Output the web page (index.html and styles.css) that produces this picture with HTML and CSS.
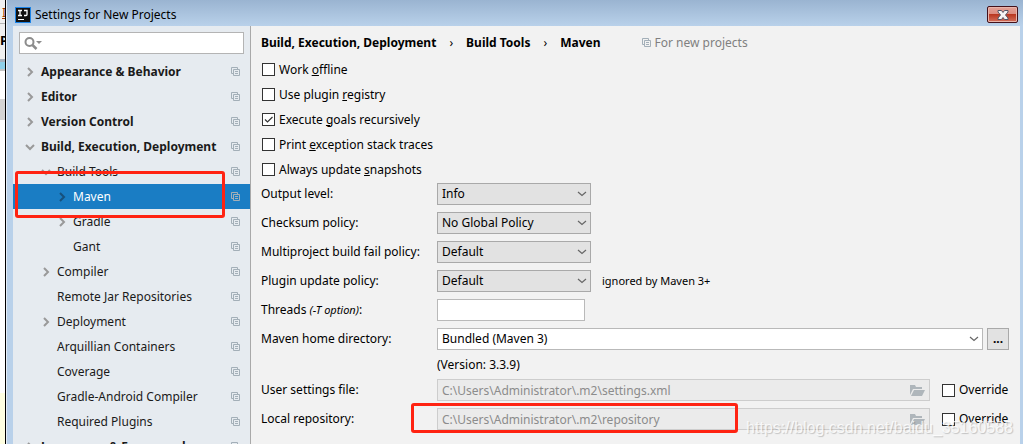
FILE: index.html
```
<!DOCTYPE html>
<html lang="en">
<head>
  <meta charset="UTF-8" />
  <meta name="viewport" content="width=device-width, initial-scale=1" />
  <title>Settings for New Projects</title>
  <link rel="stylesheet" href="styles.css">
</head>
<body>

  <!-- shared icons -->
  <svg class="sprite" aria-hidden="true">
    <symbol id="copy" viewBox="0 0 9 9">
      <path d="M2.5 6.5h-2v-6h6v2M2.5 2.5h6v6h-6zM4 4.5h3M4 6.5h3" fill="none" stroke="currentColor"/>
    </symbol>
    <symbol id="right" viewBox="0 0 8 10">
      <path d="M2 1l4 4-4 4" fill="none" stroke="currentColor" stroke-width="2"/>
    </symbol>
    <symbol id="down" viewBox="0 0 10 8">
      <path d="M1 2l4 4 4-4" fill="none" stroke="currentColor" stroke-width="2"/>
    </symbol>
    <symbol id="drop" viewBox="0 0 10 6">
      <path d="M1 1l4 3.5L9 1" fill="none" stroke="#666" stroke-width="1.2"/>
    </symbol>
    <symbol id="folder" viewBox="0 0 15 11">
      <path d="M0 0h5l1 2h6v2H3L0 10z" fill="currentColor"/>
      <path d="M4 5h11l-3 6H1z" fill="currentColor"/>
    </symbol>
  </svg>

  <div class="desktop">
    <div class="behind" aria-hidden="true">
      <div class="behind-top"><u>I</u></div>
      <div class="behind-title">P</div>
      <div class="behind-bar"></div>
      <div class="behind-white"></div>
      <div class="behind-gray"></div>
      <div class="behind-editor"></div>
      <div class="behind-hint"></div>
    </div>

    <div class="dialog">
      <header class="titlebar">
        <svg class="logo" viewBox="0 0 16 16">
          <rect width="16" height="16" fill="#1b83e6"/>
          <rect x="1" y="1" width="14" height="14" fill="#111"/>
          <path d="M3 3.500h4M5 3.500v5M3 8.500h4M9 3.500h3v4q0 1-1 1H9" fill="none" stroke="#fff" stroke-width="1.300"/>
          <path d="M3 12.500h6" stroke="#fff"/>
        </svg>
        <h1>Settings for New Projects</h1>
        <button class="close" aria-label="Close">
          <svg viewBox="0 0 12 10">
            <path d="M1 .5h3.500L6 2.500 7.500.5H11V2L8.500 5 11 8v1.500H7.500L6 7.500 4.500 9.500H1V8l2.500-3L1 2z" fill="#f5f5f5" stroke="#535666"/>
          </svg>
        </button>
      </header>

      <div class="content">
        <nav class="sidebar">
          <div class="search">
            <svg viewBox="0 0 18 13">
              <circle cx="5.500" cy="5" r="4" fill="none" stroke="#8c8c8c" stroke-width="2"/>
              <path d="M8.500 8l4 4" stroke="#8c8c8c" stroke-width="2.500"/>
              <path d="M12 4h6l-3 3z" fill="#8c8c8c"/>
            </svg>
            <input type="text" aria-label="Search settings">
          </div>
          <ul class="tree">
            <li class="group"><svg class="arrow"><use href="#right"/></svg><span>Appearance &amp; Behavior</span><svg class="copy"><use href="#copy"/></svg></li>
            <li class="group"><svg class="arrow"><use href="#right"/></svg><span>Editor</span><svg class="copy"><use href="#copy"/></svg></li>
            <li class="group"><svg class="arrow"><use href="#right"/></svg><span>Version Control</span><svg class="copy"><use href="#copy"/></svg></li>
            <li class="group"><svg class="arrow"><use href="#down"/></svg><span>Build, Execution, Deployment</span><svg class="copy"><use href="#copy"/></svg></li>
            <li class="level2"><svg class="arrow"><use href="#down"/></svg><span>Build Tools</span><svg class="copy"><use href="#copy"/></svg></li>
            <li class="level3 selected"><svg class="arrow"><use href="#right"/></svg><span>Maven</span><svg class="copy"><use href="#copy"/></svg><i class="mark mark-tree"></i></li>
            <li class="level3"><svg class="arrow"><use href="#right"/></svg><span>Gradle</span><svg class="copy"><use href="#copy"/></svg></li>
            <li class="level3"><svg class="arrow"></svg><span>Gant</span><svg class="copy"><use href="#copy"/></svg></li>
            <li class="level2"><svg class="arrow"><use href="#right"/></svg><span>Compiler</span><svg class="copy"><use href="#copy"/></svg></li>
            <li class="level2"><svg class="arrow"></svg><span>Remote Jar Repositories</span><svg class="copy"><use href="#copy"/></svg></li>
            <li class="level2"><svg class="arrow"><use href="#right"/></svg><span>Deployment</span><svg class="copy"><use href="#copy"/></svg></li>
            <li class="level2"><svg class="arrow"></svg><span>Arquillian Containers</span><svg class="copy"><use href="#copy"/></svg></li>
            <li class="level2"><svg class="arrow"></svg><span>Coverage</span><svg class="copy"><use href="#copy"/></svg></li>
            <li class="level2"><svg class="arrow"></svg><span>Gradle-Android Compiler</span><svg class="copy"><use href="#copy"/></svg></li>
            <li class="level2"><svg class="arrow"></svg><span>Required Plugins</span><svg class="copy"><use href="#copy"/></svg></li>
            <li class="group"><svg class="arrow"><use href="#right"/></svg><span>Languages &amp; Frameworks</span><svg class="copy"><use href="#copy"/></svg></li>
          </ul>
        </nav>

        <main class="panel">
          <div class="breadcrumb">
            <b>Build, Execution, Deployment</b>
            <span>›</span>
            <b>Build Tools</b>
            <span>›</span>
            <b>Maven</b>
            <div class="scope"><svg class="copy"><use href="#copy"/></svg>For new projects</div>
          </div>

          <div class="checks">
            <label class="check"><input type="checkbox"><span>Work <u>o</u>ffline</span></label>
            <label class="check"><input type="checkbox"><span>Use plugin <u>r</u>egistry</span></label>
            <label class="check"><input type="checkbox" checked><span>Execute <u>g</u>oals recursively</span></label>
            <label class="check"><input type="checkbox"><span>Print <u>e</u>xception stack traces</span></label>
            <label class="check"><input type="checkbox"><span>Always update <u>s</u>napshots</span></label>
          </div>

          <div class="form">
            <label for="output">Output level:</label>
            <div class="field">
              <div class="combo"><select id="output"><option>Info</option></select><svg><use href="#drop"/></svg></div>
            </div>

            <label for="checksum">Checksum policy:</label>
            <div class="field">
              <div class="combo"><select id="checksum"><option>No Global Policy</option></select><svg><use href="#drop"/></svg></div>
            </div>

            <label for="fail">Multiproject build fail policy:</label>
            <div class="field">
              <div class="combo"><select id="fail"><option>Default</option></select><svg><use href="#drop"/></svg></div>
            </div>

            <label for="update">Plugin update policy:</label>
            <div class="field">
              <div class="combo"><select id="update"><option>Default</option></select><svg><use href="#drop"/></svg></div>
              <small>ignored by Maven 3+</small>
            </div>

            <label for="threads">Threads <em>(-T option)</em>:</label>
            <div class="field"><input class="threads" type="text" id="threads"></div>

            <label for="home">Maven home directory:</label>
            <div class="field home">
              <div class="combo wide"><select id="home"><option>Bundled (Maven 3)</option></select><svg><use href="#drop"/></svg></div>
              <button class="browse" aria-label="Browse">...</button>
            </div>

            <div class="version">(Version: 3.3.9)</div>

            <label for="settings">User settings file:</label>
            <div class="field path">
              <div class="file"><input type="text" id="settings" value="C:\Users\Administrator\.m2\settings.xml" disabled><svg><use href="#folder"/></svg></div>
              <label class="check"><input type="checkbox"><span>Override</span></label>
            </div>

            <label for="repo">Local repository:</label>
            <div class="field path">
              <div class="file"><input type="text" id="repo" value="C:\Users\Administrator\.m2\repository" disabled><svg><use href="#folder"/></svg><i class="mark mark-repo"></i></div>
              <label class="check"><input type="checkbox"><span>Override</span></label>
            </div>
          </div>
        </main>
      </div>
    </div>
  </div>

  <div class="watermark">https://blog.csdn.net/baidu_35160588</div>

</body>
</html>
```
FILE: styles.css
```
* {
  box-sizing: border-box;
  margin: 0;
  padding: 0;
}

body {
  height: 100vh;
  overflow: hidden;
  position: relative;
  font-family: "Noto Sans", "Open Sans", sans-serif;
  font-size: 12px;
  line-height: 16px;
  color: #000;
}

input,
select,
button {
  font: inherit;
  color: inherit;
  outline: none;
}

.sprite {
  display: none;
}

.desktop {
  display: flex;
  height: 100vh;
}

/* window behind the dialog */
.behind {
  width: 6px;
  flex: none;
  display: flex;
  flex-direction: column;
  overflow: hidden;
  background: #fff;
  border-right: 1px solid #000;
}

.behind-top {
  height: 24px;
  padding: 5px 0 0 2px;
  background: #f0f0f0;
  border-bottom: 1px solid #b5b5b5;
  color: #a03c00;
}

.behind-title {
  height: 35px;
  padding-top: 8px;
  background: #f0f0f0;
  font-size: 13px;
  font-weight: bold;
}

.behind-bar {
  height: 12px;
  background: #8fcfe8;
  border-top: 3px solid #a9b2be;
  border-bottom: 2px solid #c5c5c5;
}

.behind-white {
  height: 28px;
}

.behind-gray {
  height: 21px;
  background: #d4d4d4;
}

.behind-editor {
  flex: 1;
}

.behind-hint {
  height: 51px;
  background: #ffffe1;
}

.dialog {
  flex: 1;
  display: flex;
  flex-direction: column;
  min-width: 0;
  padding: 0 3px 0 6px;
  border-left: 1px solid #e6eef7;
  background: linear-gradient(#9ab4d1, #b9d1ea 26px);
}

.titlebar {
  flex: none;
  height: 26px;
  display: flex;
  align-items: center;
  padding: 3px 2px 0;
}

.logo {
  width: 16px;
  height: 16px;
  margin-right: 4px;
}

.titlebar h1 {
  flex: 1;
  font-size: 12px;
  font-weight: normal;
}

.close {
  width: 31px;
  height: 17px;
  display: flex;
  align-items: center;
  justify-content: center;
  border: 1px solid #43111b;
  border-radius: 2px;
  background: linear-gradient(#e3a197, #dc8b7f 48%, #ba3821 50%, #d3705c);
  box-shadow: inset 0 0 0 1px #e9b5ab;
}

.close svg {
  width: 12px;
  height: 10px;
}

.content {
  flex: 1;
  display: flex;
  min-height: 0;
}

/* sidebar */
.sidebar {
  flex: none;
  width: 238px;
  padding-top: 6px;
  background: #e6ebf0;
  border-right: 1px solid #a9a9a9;
}

.search {
  height: 22px;
  margin: 0 6px 5px;
  display: flex;
  align-items: center;
  padding-left: 4px;
  background: #fff;
  border: 1px solid #b4b4b4;
}

.search svg {
  width: 18px;
  height: 13px;
}

.search input {
  flex: 1;
  min-width: 0;
  border: none;
  background: none;
}

.tree {
  list-style: none;
}

.tree li {
  position: relative;
  height: 25px;
  display: flex;
  align-items: center;
  padding: 0 10px 0 12px;
  white-space: nowrap;
  color: #1a1a1a;
}

.tree .group {
  font-weight: bold;
}

.tree .level2 {
  padding-left: 28px;
}

.tree .level3 {
  padding-left: 44px;
}

.tree span {
  flex: 1;
  min-width: 0;
}

.tree .selected {
  background: #1a7dc4;
  color: #fff;
}

.arrow {
  flex: none;
  width: 10px;
  height: 10px;
  margin-right: 6px;
  color: #999;
}

.selected .arrow {
  color: #17507c;
}

.copy {
  flex: none;
  width: 9px;
  height: 9px;
  color: #a3afb8;
}

/* settings panel */
.panel {
  flex: 1;
  min-width: 0;
  padding: 0 11px 0 10px;
  background: #f2f2f2;
}

.breadcrumb {
  height: 31px;
  display: flex;
  align-items: center;
  gap: 13px;
  padding-top: 2px;
}

.scope {
  display: flex;
  align-items: center;
  gap: 4px;
  margin-left: 28px;
  color: #808080;
}

.checks {
  padding-left: 1px;
  margin-bottom: 1px;
}

.check {
  display: flex;
  align-items: center;
  gap: 4px;
}

.checks .check {
  height: 25px;
}

.check input {
  appearance: none;
  flex: none;
  width: 13px;
  height: 13px;
  background: #fff;
  border: 1px solid #333;
}

.check input:checked {
  background: #fff url("data:image/svg+xml,%3Csvg xmlns='http://www.w3.org/2000/svg' viewBox='0 0 11 11'%3E%3Cpath d='M2 5.5l2.500 2.500L9.500 3' fill='none' stroke='%23333' stroke-width='1.2'/%3E%3C/svg%3E");
}

.form {
  display: grid;
  grid-template-columns: 176px 1fr;
  row-gap: 7px;
  align-items: center;
}

.form em {
  font-size: 11px;
}

.field {
  display: flex;
  align-items: center;
  height: 22px;
}

.combo {
  position: relative;
  width: 154px;
}

.combo select {
  appearance: none;
  display: block;
  width: 100%;
  height: 22px;
  padding: 0 20px 0 4px;
  background: #e2e2e2;
  border: 1px solid #a9a9a9;
  border-radius: 0;
}

.combo svg {
  position: absolute;
  right: 4px;
  top: 8px;
  width: 10px;
  height: 6px;
  pointer-events: none;
}

.combo.wide {
  flex: 1;
}

.combo.wide select {
  background: #fff;
  border-color: #b9b9b9;
}

.field small {
  margin-left: 11px;
  font-size: 11px;
}

.threads {
  width: 148px;
  height: 22px;
  padding: 0 4px;
  background: #fff;
  border: 1px solid #b9b9b9;
}

.home {
  gap: 4px;
}

.browse {
  width: 22px;
  height: 22px;
  background: #e2e2e2;
  border: 1px solid #a9a9a9;
  font-weight: bold;
}

.version {
  grid-column: 2;
  height: 15px;
}

.path {
  gap: 12px;
}

.path .check {
  flex: none;
  min-width: 67px;
}

.file {
  position: relative;
  flex: 1;
}

.file input {
  display: block;
  width: 100%;
  height: 22px;
  padding: 0 24px 0 4px;
  background: #ebebeb;
  border: 1px solid #cdcdcd;
  color: #8c8c8c;
}

.file svg {
  position: absolute;
  right: 5px;
  top: 6px;
  width: 15px;
  height: 11px;
  color: #afb6bb;
}

/* red highlight frames */
.mark {
  position: absolute;
  z-index: 1;
  border: 3px solid #ff2312;
  border-radius: 3px;
}

.mark-tree {
  left: 2px;
  right: 25px;
  top: -13px;
  bottom: -9px;
}

.mark-repo {
  left: -26px;
  width: 327px;
  top: -5px;
  bottom: -3px;
}

.watermark {
  position: absolute;
  right: 10px;
  bottom: 6px;
  font-family: "Liberation Sans", sans-serif;
  font-size: 16px;
  line-height: 20px;
  color: rgba(255, 255, 255, 0.8);
  text-shadow: 1px 1px 1px rgba(0, 0, 0, 0.2);
  pointer-events: none;
}
```
